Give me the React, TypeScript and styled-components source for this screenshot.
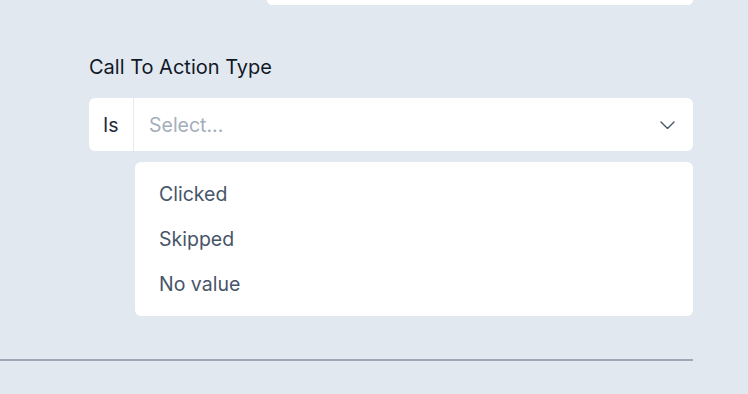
import React from "react";
import styled, { createGlobalStyle } from "styled-components";

const Global = createGlobalStyle`
  html, body { margin: 0; padding: 0; background: #e2e8f0; }
  body { font-family: Inter, "Noto Sans", sans-serif; -webkit-font-smoothing: antialiased; }
  * { box-sizing: border-box; }
`;

const Page = styled.div`
  width: 748px;
  height: 394px;
  overflow: hidden;
  background: #e2e8f0;
  display: flex;
  flex-direction: column;
`;

const Column = styled.div`
  margin-left: 89px;
  width: 604px;
  display: flex;
  flex-direction: column;
`;

const PrevCard = styled.div`
  margin-left: 178px;
  height: 5px;
  background: #ffffff;
  border-radius: 0 0 6px 6px;
`;

const Label = styled.div`
  margin-top: 50px;
  height: 24px;
  line-height: 24px;
  font-size: 20px;
  font-weight: 400;
  color: #111827;
`;

const SelectBox = styled.div`
  margin-top: 19px;
  height: 53px;
  background: #ffffff;
  border-radius: 6px;
  display: flex;
  align-items: stretch;
`;

const Operator = styled.div`
  width: 45px;
  padding-left: 14px;
  display: flex;
  align-items: center;
  font-size: 19.5px;
  color: #1e293b;
  border-right: 1px solid #e5e9f0;
`;

const Input = styled.div`
  flex: 1;
  display: flex;
  align-items: center;
  justify-content: space-between;
  padding: 0 18px 0 15px;
  font-size: 19.5px;
  color: #a4adbc;
`;

const Menu = styled.div`
  margin-top: 11px;
  margin-left: 46px;
  background: #ffffff;
  border-radius: 6px;
  padding: 9px 0 10px;
  display: flex;
  flex-direction: column;
`;

const Option = styled.div`
  height: 45px;
  display: flex;
  align-items: center;
  padding-left: 24px;
  font-size: 19.5px;
  color: #475569;
`;

const Divider = styled.div`
  margin-top: 43px;
  width: 693px;
  height: 1.5px;
  background: #9ea8b7;
`;

const Chevron = () => (
  <svg width="15" height="8" viewBox="0 0 15 8" fill="none">
    <path d="M1 1l6.5 6.5L14 1" stroke="#475569" strokeWidth="1.4" strokeLinecap="round" strokeLinejoin="round" />
  </svg>
);

export default function App() {
  return (
    <Page>
      <Global />
      <Column>
        <PrevCard />
        <Label>Call To Action Type</Label>
        <SelectBox>
          <Operator>Is</Operator>
          <Input>
            <span>Select...</span>
            <Chevron />
          </Input>
        </SelectBox>
        <Menu>
          <Option>Clicked</Option>
          <Option>Skipped</Option>
          <Option>No value</Option>
        </Menu>
      </Column>
      <Divider />
    </Page>
  );
}
